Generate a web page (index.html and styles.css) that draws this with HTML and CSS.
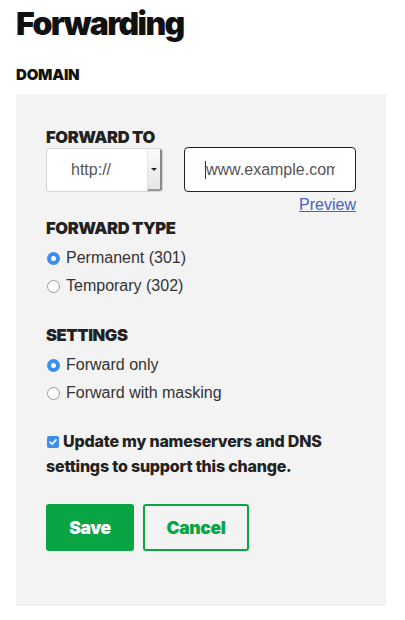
FILE: index.html
```html
<!DOCTYPE html>
<html>
<head>
<meta charset="utf-8">
<link rel="stylesheet" href="styles.css">
</head>
<body>
<div class="page">
  <h1 class="title">Forwarding</h1>
  <h2 class="section">DOMAIN</h2>
  <div class="panel">
    <h3 class="label first">FORWARD TO</h3>
    <div class="url-row">
      <div class="select">
        <span class="select-text">http://</span>
        <span class="select-btn"><span class="arrow"></span></span>
      </div>
      <div class="field"><span class="field-text"><span class="caret"></span>www.example.com</span></div>
    </div>
    <div class="preview-row"><a class="preview" href="#">Preview</a></div>

    <h3 class="label type">FORWARD TYPE</h3>
    <div class="options">
      <div class="option"><span class="radio on"></span>Permanent (301)</div>
      <div class="option"><span class="radio"></span>Temporary (302)</div>
    </div>

    <h3 class="label settings">SETTINGS</h3>
    <div class="options">
      <div class="option"><span class="radio on"></span>Forward only</div>
      <div class="option"><span class="radio"></span>Forward with masking</div>
    </div>

    <p class="check-line"><span class="checkbox"><svg viewBox="0 0 12 12" width="12" height="12"><path d="M3 6.2 L5.1 8.2 L9 3.9" fill="none" stroke="#fff" stroke-width="1.6" stroke-linecap="round" stroke-linejoin="round"/></svg></span>Update my nameservers and DNS settings to support this change.</p>

    <div class="buttons">
      <button class="btn save">Save</button>
      <button class="btn cancel">Cancel</button>
    </div>
  </div>
</div>
</body>
</html>
```
FILE: styles.css
```css
* { box-sizing: border-box; }
html, body { margin: 0; padding: 0; background: #fff; }
body { font-family: "Liberation Sans", Arial, sans-serif; color: #111; }
.page { padding: 0 19px 0 16px; }

.title {
  font-family: Inter, "Lato", sans-serif;
  font-weight: 900;
  font-size: 32px;
  letter-spacing: -1.6px;
  line-height: 40px;
  margin: 4px 0 0 0;
  color: #111;
}
.section {
  font-family: Inter, "Lato", sans-serif;
  font-weight: 900;
  font-size: 15px;
  letter-spacing: -0.2px;
  line-height: 20px;
  margin: 21px 0 0 0;
  color: #111;
}
.panel {
  background: #f3f3f3;
  margin-top: 9px;
  height: 512px;
  padding: 33px 30px 0 30px;
}
.label {
  font-family: Inter, "Lato", sans-serif;
  font-weight: 900;
  font-size: 16.5px;
  letter-spacing: -0.4px;
  line-height: 20px;
  margin: 0;
  color: #222;
}
.url-row { display: flex; gap: 21px; margin-top: 1px; }
.select {
  width: 117px; height: 44px;
  background: #fff;
  border: 1px solid #d4d4d4;
  border-radius: 3px;
  display: flex; align-items: center;
  overflow: hidden;
}
.select-text {
  flex: 1;
  font-size: 16px;
  color: #555;
  padding-left: 24px;
}
.select-btn {
  width: 15px; height: 100%;
  background: linear-gradient(#fafafa, #e6e6e6);
  border-left: 1px solid #e4e4e4;
  border-right: 2px solid #8a8a8a;
  border-bottom: 2px solid #9a9a9a;
  display: flex; align-items: center; justify-content: center;
}
.arrow {
  width: 0; height: 0;
  border-left: 3px solid transparent;
  border-right: 3px solid transparent;
  border-top: 3px solid #222;
}
.field {
  width: 172px; height: 45px;
  margin-top: -1px;
  background: #fff;
  border: 1px solid #222;
  border-radius: 4px;
  padding: 0 20px;
  display: flex; align-items: center;
}
.field-text {
  display: block;
  width: 130px;
  white-space: nowrap;
  overflow: hidden;
  font-size: 16px;
  line-height: 20px;
  color: #555;
}
.caret { display: inline-block; width: 1px; height: 18px; background: #333; vertical-align: -4px; }
.preview-row { display: flex; justify-content: flex-end; width: 310px; margin-top: 4px; }
.preview { color: #4863c4; font-size: 16px; line-height: 18px; text-decoration: underline; }

.label.type { margin-top: 4px; }
.options { margin-top: 6px; }
.option {
  display: flex; align-items: center;
  height: 28px;
  font-size: 16px;
  color: #333;
}
.radio {
  width: 13px; height: 13px;
  border-radius: 50%;
  border: 1px solid #9a9a9a;
  background: #fff;
  margin: 0 6px 0 1px;
  flex: none;
}
.radio.on {
  border: 4px solid #3b8ef0;
  background: #fff;
}
.label.settings { margin-top: 25px; }
.check-line {
  margin: 22px 0 0 0;
  width: 285px;
  font-family: Inter, "Lato", sans-serif;
  font-weight: 800;
  font-size: 16px;
  letter-spacing: -0.2px;
  line-height: 25px;
  color: #222;
}
.checkbox {
  display: inline-block;
  width: 12px; height: 12px;
  border-radius: 2px;
  background: #3b8ef0;
  vertical-align: -1px;
  margin: 0 4px 0 1px;
}
.checkbox svg { display: block; }
.buttons { display: flex; gap: 9px; margin-top: 25px; }
.btn {
  height: 47px;
  font-family: Inter, "Lato", sans-serif;
  font-weight: 900;
  font-size: 17.5px;
  letter-spacing: -0.4px;
  border-radius: 3px;
  cursor: pointer;
}
.save { width: 88px; background: #09a544; color: #fff; border: none; }
.cancel { width: 106px; background: transparent; color: #09a544; border: 2px solid #09a544; }
```
